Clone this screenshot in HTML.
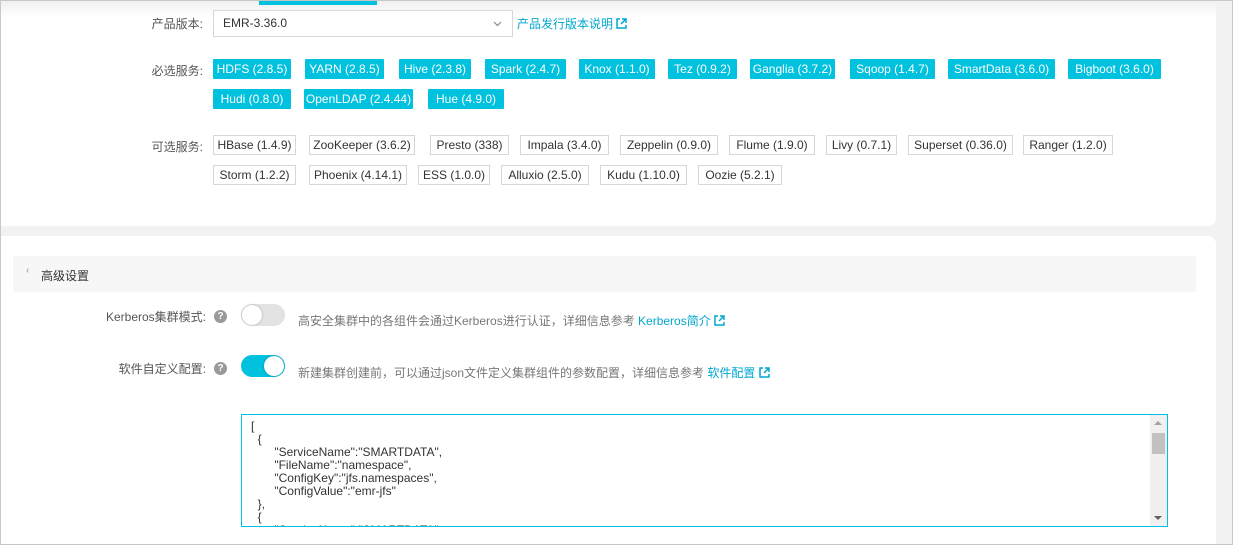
<!DOCTYPE html>
<html style="overflow:hidden;height:545px"><head><meta charset="utf-8"><style>
*{box-sizing:border-box;margin:0;padding:0}
body{width:1233px;height:545px;overflow:hidden;background:#f2f2f2;font-family:"Liberation Sans","Noto Sans CJK SC",sans-serif;font-size:12px;color:#333;position:relative}
.frame{position:absolute;left:0;top:0;width:1233px;height:545px;border:1px solid #c8c8c8;pointer-events:none;z-index:10}
.card1{position:absolute;left:1px;top:0;width:1215px;height:226px;background:#fff;border-radius:0 0 8px 0;background:linear-gradient(#efefef,#fff 18px)}
.card2{position:absolute;left:1px;top:236px;width:1215px;height:320px;background:#fff;border-radius:0 8px 0 0}
.a{position:absolute;white-space:nowrap}
.lbl{color:#555;text-align:right;width:120px}
.tag{position:absolute;height:20px;line-height:20px;text-align:center;font-size:12px}
.r{background:#00c1de;color:#fff;border-radius:1px}
.o{border:1px solid #d7d7d7;background:#fff;color:#333;line-height:18px}
.link{color:#00a7d0}
.help{position:absolute;width:13px;height:13px;border-radius:50%;background:#999;color:#fff;font-size:10px;line-height:13px;text-align:center;font-weight:bold}
.tog{position:absolute;width:44px;height:22px;border-radius:11px}
.tog i{position:absolute;top:1px;width:20px;height:20px;border-radius:50%;background:#fff;box-shadow:0 0 2px rgba(0,0,0,.3)}
.desc{color:#777}
</style></head><body>
<div class="card1"></div>
<div class="a" style="left:259px;top:1px;width:118px;height:4px;background:#00c1de"></div>
<div class="a lbl" style="left:83px;top:15px">产品版本:</div>
<div class="a" style="left:213px;top:10px;width:300px;height:27px;border:1px solid #d7d7d7;background:#fff;padding-left:9px;line-height:25px">EMR-3.36.0
<svg style="position:absolute;right:10px;top:10px" width="9" height="6" viewBox="0 0 9 6"><path d="M1 1l3.5 3.5L8 1" stroke="#888" fill="none" stroke-width="1.2"/></svg></div>
<div class="a link" style="left:517px;top:15px">产品发行版本说明 <svg width="11" height="11" viewBox="0 0 11 11" style="vertical-align:-1px"><path d="M4 1H1v9h9V7M6 1h4v4M10 1L5 6" stroke="#00a7d0" fill="none" stroke-width="1.5"/></svg></div>

<div class="a lbl" style="left:83px;top:62px">必选服务:</div>
<div class="tag r" style="left:213px;top:59px;width:78px">HDFS (2.8.5)</div>
<div class="tag r" style="left:305px;top:59px;width:79px">YARN (2.8.5)</div>
<div class="tag r" style="left:399px;top:59px;width:72px">Hive (2.3.8)</div>
<div class="tag r" style="left:485px;top:59px;width:81px">Spark (2.4.7)</div>
<div class="tag r" style="left:579px;top:59px;width:76px">Knox (1.1.0)</div>
<div class="tag r" style="left:668px;top:59px;width:69px">Tez (0.9.2)</div>
<div class="tag r" style="left:750px;top:59px;width:85px">Ganglia (3.7.2)</div>
<div class="tag r" style="left:850px;top:59px;width:85px">Sqoop (1.4.7)</div>
<div class="tag r" style="left:948px;top:59px;width:107px">SmartData (3.6.0)</div>
<div class="tag r" style="left:1068px;top:59px;width:93px">Bigboot (3.6.0)</div>
<div class="tag r" style="left:213px;top:89px;width:78px">Hudi (0.8.0)</div>
<div class="tag r" style="left:304px;top:89px;width:109px">OpenLDAP (2.4.44)</div>
<div class="tag r" style="left:428px;top:89px;width:76px">Hue (4.9.0)</div>

<div class="a lbl" style="left:83px;top:138px">可选服务:</div>
<div class="tag o" style="left:213px;top:135px;width:83px">HBase (1.4.9)</div>
<div class="tag o" style="left:309px;top:135px;width:106px">ZooKeeper (3.6.2)</div>
<div class="tag o" style="left:430px;top:135px;width:79px">Presto (338)</div>
<div class="tag o" style="left:520px;top:135px;width:89px">Impala (3.4.0)</div>
<div class="tag o" style="left:620px;top:135px;width:98px">Zeppelin (0.9.0)</div>
<div class="tag o" style="left:729px;top:135px;width:86px">Flume (1.9.0)</div>
<div class="tag o" style="left:826px;top:135px;width:71px">Livy (0.7.1)</div>
<div class="tag o" style="left:908px;top:135px;width:105px">Superset (0.36.0)</div>
<div class="tag o" style="left:1023px;top:135px;width:90px">Ranger (1.2.0)</div>
<div class="tag o" style="left:213px;top:165px;width:83px">Storm (1.2.2)</div>
<div class="tag o" style="left:309px;top:165px;width:98px">Phoenix (4.14.1)</div>
<div class="tag o" style="left:418px;top:165px;width:72px">ESS (1.0.0)</div>
<div class="tag o" style="left:501px;top:165px;width:88px">Alluxio (2.5.0)</div>
<div class="tag o" style="left:600px;top:165px;width:87px">Kudu (1.10.0)</div>
<div class="tag o" style="left:698px;top:165px;width:84px">Oozie (5.2.1)</div>

<div class="card2"></div>
<div class="a" style="left:13px;top:256px;width:1183px;height:36px;background:#f7f7f7"></div>
<div class="a" style="left:26px;top:265px;color:#999;font-size:10px">‹</div>
<div class="a" style="left:41px;top:267px;font-size:12px;color:#333">高级设置</div>

<div class="a lbl" style="left:86px;top:308px;color:#555">Kerberos集群模式:</div>
<div class="help" style="left:214px;top:310px">?</div>
<div class="tog" style="left:241px;top:304px;background:#e3e3e3"><i style="left:1px"></i></div>
<div class="a desc" style="left:298px;top:312px">高安全集群中的各组件会通过Kerberos进行认证，详细信息参考 <span class="link">Kerberos简介</span> <svg width="11" height="11" viewBox="0 0 11 11" style="vertical-align:-1px"><path d="M4 1H1v9h9V7M6 1h4v4M10 1L5 6" stroke="#00a7d0" fill="none" stroke-width="1.5"/></svg></div>

<div class="a lbl" style="left:86px;top:360px;color:#555">软件自定义配置:</div>
<div class="help" style="left:214px;top:362px">?</div>
<div class="tog" style="left:241px;top:355px;background:#00c1de"><i style="left:23px"></i></div>
<div class="a desc" style="left:298px;top:364px">新建集群创建前，可以通过json文件定义集群组件的参数配置，详细信息参考 <span class="link">软件配置</span> <svg width="11" height="11" viewBox="0 0 11 11" style="vertical-align:-1px"><path d="M4 1H1v9h9V7M6 1h4v4M10 1L5 6" stroke="#00a7d0" fill="none" stroke-width="1.5"/></svg></div>

<div class="a" style="left:241px;top:414px;width:927px;height:113px;border:1px solid #00c1de;background:#fff;overflow:hidden">
<pre style="font-family:'Liberation Sans',sans-serif;font-size:12px;line-height:13px;color:#333;padding:5px 0 0 9px">[
  {
       "ServiceName":"SMARTDATA",
       "FileName":"namespace",
       "ConfigKey":"jfs.namespaces",
       "ConfigValue":"emr-jfs"
  },
  {
       "ServiceName":"SMARTDATA",</pre>
<div style="position:absolute;right:0;top:0;width:17px;height:111px;background:#f0f0f0">
<div style="position:absolute;left:4px;top:6px;width:0;height:0;border-left:4px solid transparent;border-right:4px solid transparent;border-bottom:4px solid #a3a3a3"></div>
<div style="position:absolute;left:2px;top:18px;width:13px;height:21px;background:#c1c1c1"></div>
<div style="position:absolute;left:4px;bottom:6px;width:0;height:0;border-left:4px solid transparent;border-right:4px solid transparent;border-top:4px solid #606060"></div>
</div></div>
<div class="frame"></div>
</body></html>
